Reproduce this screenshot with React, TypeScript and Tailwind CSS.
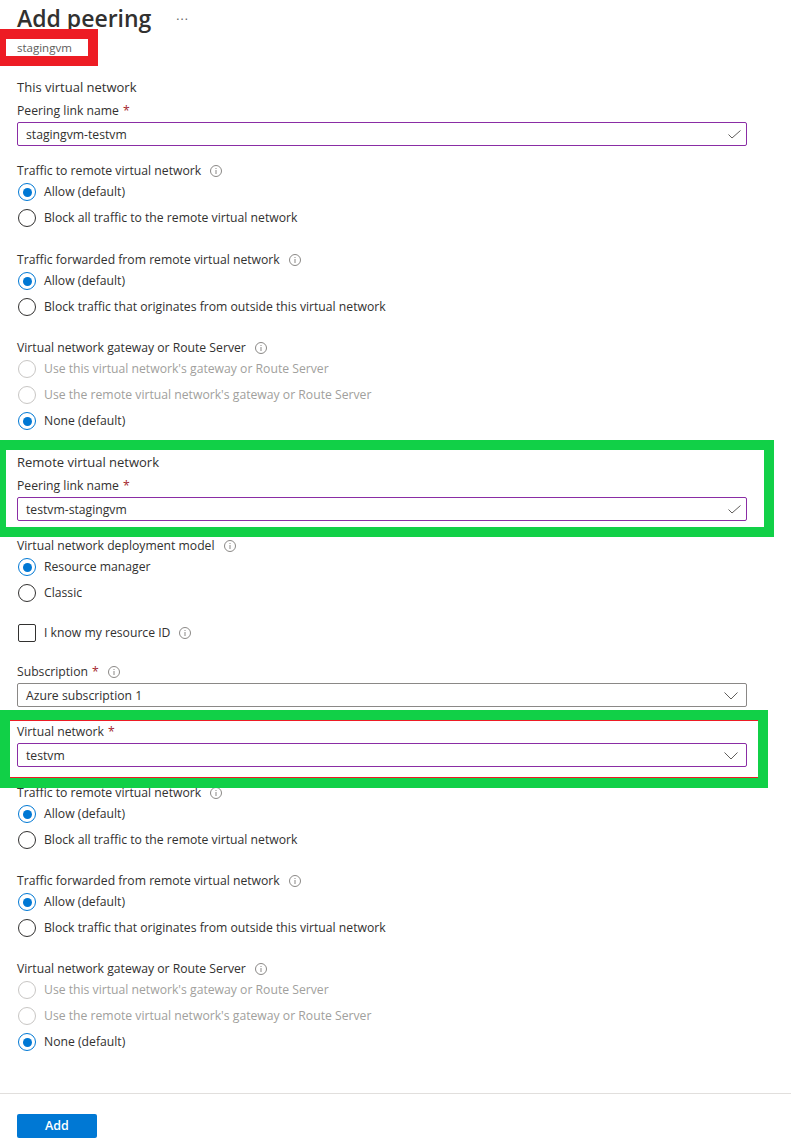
import React from "react";

const FONT = { fontFamily: '"Open Sans", "Noto Sans", Arial, sans-serif' };

function InfoIcon() {
  return (
    <svg width="12" height="12" viewBox="0 0 12 12" className="ml-[9px] shrink-0">
      <circle cx="6" cy="6" r="5.5" fill="none" stroke="#8a8886" strokeWidth="1" />
      <rect x="5.5" y="5" width="1" height="4" fill="#8a8886" />
      <rect x="5.5" y="3" width="1" height="1" fill="#8a8886" />
    </svg>
  );
}

function Req() {
  return <span className="ml-[4px] text-[#a4262c]">*</span>;
}

function Heading({ text, info = true }: { text: string; info?: boolean }) {
  return (
    <div className="flex h-[17px] items-center px-[17px] pt-[2px] text-[12.2px] leading-[15px] text-[#323130]">
      <span>{text}</span>
      {info && <InfoIcon />}
    </div>
  );
}

function Radio({
  label,
  checked = false,
  disabled = false,
}: {
  label: string;
  checked?: boolean;
  disabled?: boolean;
}) {
  const ring = checked
    ? "border-[#0078d4]"
    : disabled
      ? "border-[#c8c6c4]"
      : "border-[#323130]";
  return (
    <div className="flex h-[26px] items-center px-[18px] pt-[2px]">
      <div
        className={`flex h-[18px] w-[18px] items-center justify-center rounded-full border bg-white ${ring}`}
      >
        {checked && <div className="h-[9px] w-[9px] rounded-full bg-[#0078d4]" />}
      </div>
      <span
        className={`ml-[8px] text-[12.2px] ${disabled ? "text-[#a19f9d]" : "text-[#323130]"}`}
      >
        {label}
      </span>
    </div>
  );
}

function Check() {
  return (
    <svg width="13" height="9" viewBox="0 0 13 9" className="absolute right-[5px] top-[7px]">
      <path d="M0.5 4.5 L4 8 L12.5 0.5" fill="none" stroke="#605e5c" strokeWidth="1" />
    </svg>
  );
}

function Chevron() {
  return (
    <svg width="14" height="8" viewBox="0 0 14 8" className="absolute right-[8px] top-[8px]">
      <path d="M0.5 0.5 L7 7 L13.5 0.5" fill="none" stroke="#605e5c" strokeWidth="1" />
    </svg>
  );
}

function Field({
  value,
  purple = true,
  kind,
}: {
  value: string;
  purple?: boolean;
  kind: "check" | "select";
}) {
  return (
    <div
      className={`relative flex h-[24px] w-[730px] items-center rounded-[2px] border bg-white pl-[8px] pt-[2px] text-[12.2px] text-[#323130] ${
        purple ? "border-[#8a2da5]" : "border-[#8a8886]"
      }`}
    >
      {value}
      {kind === "check" ? <Check /> : <Chevron />}
    </div>
  );
}

function Label({ text, required = false }: { text: string; required?: boolean }) {
  return (
    <div className="flex h-[20px] items-center pt-[2px] text-[12.2px] leading-[18px] text-[#323130]">
      {text}
      {required && <Req />}
    </div>
  );
}

function TrafficGroups() {
  return (
    <>
      <Heading text="Traffic forwarded from remote virtual network" />
      <Radio label="Allow (default)" checked />
      <Radio label="Block traffic that originates from outside this virtual network" />
      <div className="mt-[19px]">
        <Heading text="Virtual network gateway or Route Server" />
      </div>
      <Radio label="Use this virtual network's gateway or Route Server" disabled />
      <Radio label="Use the remote virtual network's gateway or Route Server" disabled />
      <Radio label="None (default)" checked />
    </>
  );
}

export default function App() {
  return (
    <div className="w-[791px] min-h-[1143px] overflow-hidden bg-white" style={FONT}>
      <div className="flex h-[29px] items-start px-[17px] pt-[2px]">
        <span className="text-[23px] font-semibold leading-[32px] text-[#323130]">
          Add peering
        </span>
        <span className="ml-[25px] mt-[5px] text-[12px] tracking-[1px] text-[#605e5c]">
          ...
        </span>
      </div>

      <div className="relative z-10 w-[98px] border-b-[10px] border-l-[6px] border-r-[10px] border-t-[10px] border-[#ed1c24] bg-white">
        <div className="flex h-[17px] items-center pl-[11px] text-[11.5px] text-[#605e5c]">
          stagingvm
        </div>
      </div>

      <div className="mt-[11px] flex h-[20px] items-center px-[17px] pt-[2px] text-[13px] text-[#323130]">
        This virtual network
      </div>
      <div className="mt-[3px] px-[17px]">
        <Label text="Peering link name" required />
        <div className="mt-[2px]">
          <Field value="stagingvm-testvm" kind="check" />
        </div>
      </div>

      <div className="mt-[15px]">
        <Heading text="Traffic to remote virtual network" />
      </div>
      <Radio label="Allow (default)" checked />
      <Radio label="Block all traffic to the remote virtual network" />

      <div className="mt-[20px]">
        <TrafficGroups />
      </div>

      <div className="relative z-10 mt-[7px] w-[774px] border-b-[10px] border-l-[6px] border-r-[10px] border-t-[10px] border-[#11d047] bg-white">
        <div className="pb-[6px] pl-[11px] pt-[2px]">
          <div className="flex h-[20px] items-center pt-[2px] text-[13px] text-[#323130]">
            Remote virtual network
          </div>
          <div className="mt-[3px]">
            <Label text="Peering link name" required />
          </div>
          <div className="mt-[2px]">
            <Field value="testvm-stagingvm" kind="check" />
          </div>
        </div>
      </div>

      <div className="-mt-[1px]">
        <Heading text="Virtual network deployment model" />
      </div>
      <Radio label="Resource manager" checked />
      <Radio label="Classic" />

      <div className="mt-[14px] flex h-[26px] items-center px-[18px] pt-[2px]">
        <div className="h-[18px] w-[18px] rounded-[2px] border border-[#323130] bg-white" />
        <span className="ml-[8px] text-[12.2px] text-[#323130]">I know my resource ID</span>
        <InfoIcon />
      </div>

      <div className="mt-[18px] flex h-[16px] items-center px-[17px] pt-[2px] text-[12.2px] leading-[14px] text-[#323130]">
        Subscription
        <Req />
        <InfoIcon />
      </div>
      <div className="mt-[4px] px-[17px]">
        <Field value="Azure subscription 1" purple={false} kind="select" />
      </div>

      <div className="relative z-10 mt-[3px] w-[768px] border-b-[10px] border-l-[10px] border-r-[10px] border-t-[10px] border-[#11d047]">
        <div className="border-y border-[#ed1c24] bg-white pb-[10px] pl-[7px]">
          <Label text="Virtual network" required />
          <div className="mt-[2px]">
            <Field value="testvm" kind="select" />
          </div>
        </div>
      </div>

      <div className="-mt-[5px]">
        <Heading text="Traffic to remote virtual network" />
      </div>
      <Radio label="Allow (default)" checked />
      <Radio label="Block all traffic to the remote virtual network" />

      <div className="mt-[19px]">
        <TrafficGroups />
      </div>

      <div className="mt-[39px] h-px w-full bg-[#e1dfdd]" />

      <div className="mt-[20px] px-[17px]">
        <button className="flex h-[24px] w-[80px] items-center justify-center rounded-[2px] bg-[#0078d4] pt-[1px] text-[12.5px] font-semibold text-white">
          Add
        </button>
      </div>
    </div>
  );
}
